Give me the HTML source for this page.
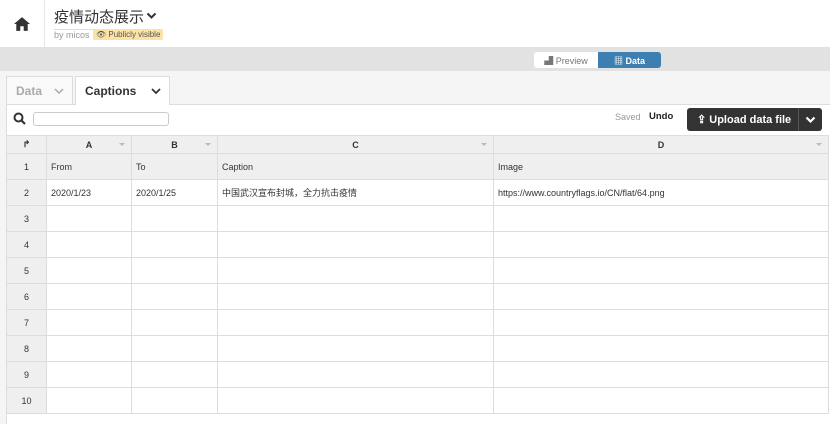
<!DOCTYPE html>
<html><head><meta charset="utf-8"><style>
*{box-sizing:border-box;margin:0;padding:0}
body{width:830px;height:417px;overflow:hidden;background:#f5f5f5;font-family:"Liberation Sans","Noto Sans CJK SC",sans-serif;color:#333;position:relative}
.hdr{position:absolute;left:0;top:0;width:830px;height:47px;background:#fff}
.home{position:absolute;left:0;top:0;width:45px;height:47px;border-right:1px solid #e6e6e6;display:flex;align-items:center;justify-content:center}
.title{position:absolute;left:54px;top:6px;font-size:15px;color:#333;border-bottom:1px solid #ddd;padding-bottom:2px}
.chev{position:absolute;left:146px;top:12px}
.by{position:absolute;left:54px;top:30px;font-size:9px;color:#999}
.pub{position:absolute;left:93px;top:29px;background:#fbe2a6;color:#555;font-size:8px;padding:1px 3px;border-radius:2px}
.bar{position:absolute;left:0;top:47px;width:830px;height:24px;background:#e2e2e2}
.seg{position:absolute;top:52px;height:16px;font-size:9px;display:flex;align-items:center;justify-content:center;gap:3px}
.tab{position:absolute;top:76px;height:29px;border:1px solid #ddd;border-bottom:none;background:#f9f9f9;font-size:12px;font-weight:bold;display:flex;align-items:center;padding-left:9px}
.panel{position:absolute;left:6px;top:104px;width:830px;height:320px;background:#fff;border-left:1px solid #ddd;border-top:1px solid #ddd}
.srch{position:absolute;left:33px;top:112px;width:136px;height:14px;border:1px solid #ccc;border-radius:3px}
.upl{position:absolute;left:687px;top:108px;width:135px;height:23px;background:#333;border-radius:3px;color:#fff;font-size:11px;font-weight:bold}
table{position:absolute;left:6px;top:135px;border-collapse:collapse;font-size:9px;table-layout:fixed;width:822px}
td{border:1px solid #ddd;height:26px;padding-left:4px;color:#333;overflow:hidden;white-space:nowrap}
tr.h td{height:18px;background:#efefef;text-align:center;font-weight:bold;padding:0;position:relative}
td.n{background:#efefef;text-align:center;padding:0}
tr.r1 td{background:#efefef}
.dd{position:absolute;right:6px;top:7px;border-left:3px solid transparent;border-right:3px solid transparent;border-top:3px solid #bbb}
</style></head><body>
<div class="hdr">
<div class="home"><svg width="16" height="14" viewBox="0 0 14 12"><path d="M7 0L0 6h2v6h3.5V8h3v4H12V6h2z" fill="#333"/></svg></div>
<div class="title">疫情动态展示</div>
<svg class="chev" width="11" height="8" viewBox="0 0 11 8"><path d="M1.5 1.5l4 4 4-4" stroke="#333" stroke-width="2" fill="none"/></svg>
<div class="by">by micos</div>
<div class="pub">👁 Publicly visible</div>
</div>
<div class="bar"></div>
<div class="seg" style="left:534px;width:64px;background:#fff;color:#777;border-radius:3px 0 0 3px">▟ Preview</div>
<div class="seg" style="left:598px;width:63px;background:#3d7fb0;color:#fff;font-weight:bold;border-radius:0 3px 3px 0">▦ Data</div>
<div class="tab" style="left:6px;width:67px;color:#aaa">Data<svg style="margin-left:12px" width="10" height="7" viewBox="0 0 10 7"><path d="M1 1l4 4 4-4" stroke="#aaa" stroke-width="1.5" fill="none"/></svg></div>
<div class="panel"></div>
<div class="tab" style="left:75px;width:95px;height:29px;background:#fff;color:#333;z-index:2">Captions<svg style="margin-left:15px" width="10" height="7" viewBox="0 0 10 7"><path d="M1 1l4 4 4-4" stroke="#333" stroke-width="1.8" fill="none"/></svg></div>
<svg style="position:absolute;left:13px;top:112px" width="13" height="13" viewBox="0 0 13 13"><circle cx="5.5" cy="5.5" r="4" stroke="#333" stroke-width="2" fill="none"/><path d="M8.5 8.5L12 12" stroke="#333" stroke-width="2.2"/></svg>
<div class="srch"></div>
<div style="position:absolute;left:615px;top:112px;font-size:9px;color:#999">Saved</div>
<div style="position:absolute;left:649px;top:111px;font-size:9.5px;font-weight:bold;color:#222">Undo</div>
<div class="upl"><span style="position:absolute;left:10px;top:5px">⇪ Upload data file</span><div style="position:absolute;left:111px;top:0;width:1px;height:23px;background:#555"></div><svg style="position:absolute;left:118px;top:8px" width="11" height="8" viewBox="0 0 11 8"><path d="M1.5 1.5l4 4 4-4" stroke="#fff" stroke-width="2.2" fill="none"/></svg></div>
<table>
<colgroup><col style="width:40px"><col style="width:85px"><col style="width:86px"><col style="width:276px"><col style="width:335px"></colgroup>
<tr class="h"><td>↱</td><td>A<span class="dd"></span></td><td>B<span class="dd"></span></td><td>C<span class="dd"></span></td><td>D<span class="dd"></span></td></tr>
<tr class="r1"><td class="n">1</td><td>From</td><td>To</td><td>Caption</td><td>Image</td></tr>
<tr><td class="n">2</td><td>2020/1/23</td><td>2020/1/25</td><td>中国武汉宣布封城，全力抗击疫情</td><td>https://www.countryflags.io/CN/flat/64.png</td></tr>
<tr><td class="n">3</td><td></td><td></td><td></td><td></td></tr>
<tr><td class="n">4</td><td></td><td></td><td></td><td></td></tr>
<tr><td class="n">5</td><td></td><td></td><td></td><td></td></tr>
<tr><td class="n">6</td><td></td><td></td><td></td><td></td></tr>
<tr><td class="n">7</td><td></td><td></td><td></td><td></td></tr>
<tr><td class="n">8</td><td></td><td></td><td></td><td></td></tr>
<tr><td class="n">9</td><td></td><td></td><td></td><td></td></tr>
<tr><td class="n">10</td><td></td><td></td><td></td><td></td></tr>
</table>
</body></html>
